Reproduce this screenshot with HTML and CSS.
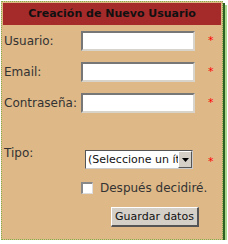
FILE: index.html
```html
<!DOCTYPE html>
<html lang="es">
<head>
  <meta charset="UTF-8">
  <title>Creación de Nuevo Usuario</title>
  <link rel="stylesheet" href="styles.css">
</head>
<body>
  <form class="panel">
    <div class="titulo">Creación de Nuevo Usuario</div>

    <div class="fila">
      <label class="etiqueta">Usuario:</label>
      <input type="text" class="campo">
      <span class="requerido">*</span>
    </div>
    <div class="fila">
      <label class="etiqueta">Email:</label>
      <input type="text" class="campo">
      <span class="requerido">*</span>
    </div>
    <div class="fila">
      <label class="etiqueta">Contraseña:</label>
      <input type="password" class="campo">
      <span class="requerido">*</span>
    </div>

    <div class="fila tipo">
      <label class="etiqueta">Tipo:</label>
      <div class="combo">
        <span class="combo-texto">(Seleccione un ítem)</span>
        <span class="combo-boton">
          <svg width="7" height="4" viewBox="0 0 7 4"><path d="M0 0h7L3.5 4z" fill="#000"/></svg>
        </span>
      </div>
      <span class="requerido">*</span>
    </div>

    <div class="fila opcion">
      <input type="checkbox" class="casilla">
      <span class="texto-casilla">Después decidiré.</span>
    </div>

    <div class="acciones">
      <button type="button" class="boton">Guardar datos</button>
    </div>
  </form>
</body>
</html>
```

FILE: styles.css
```css
body {
  margin: 0;
  background-color: #fff;
  font-family: "DejaVu Sans", Verdana, sans-serif;
}

.panel {
  margin: 1px 0 0 1px;
  width: 222px;
  height: 239px;
  box-sizing: border-box;
  border: 1px dotted #7fb24a;
  background-color: #deb887;
  box-shadow: 2px 2px 0 #2f5f22, 4px 4px 0 #a9d88c;
  padding: 1px 0 0 1px;
}

.titulo {
  height: 22px;
  line-height: 22px;
  margin-right: 1px;
  background-color: #a52a2a;
  color: #111;
  font-size: 11px;
  font-weight: bold;
  text-align: center;
}

.fila {
  display: flex;
  align-items: center;
  height: 31px;
  padding-left: 1px;
}

.etiqueta {
  width: 77px;
  font-size: 12px;
  color: #333;
}

.campo {
  width: 114px;
  height: 20px;
  box-sizing: border-box;
  margin: 0;
  border-style: solid;
  border-width: 2px;
  border-color: #777 #d8d4cc #d8d4cc #777;
  background-color: #fff;
}

.requerido {
  margin-left: 13px;
  color: #f00;
  font-size: 11px;
  line-height: 1;
}

/* fila de tipo, separada del resto */
.fila.tipo {
  margin-top: 32px;
  height: 19px;
  align-items: flex-start;
}

.tipo .etiqueta {
  margin-top: -4px;
}

.combo {
  display: flex;
  width: 108px;
  height: 19px;
  box-sizing: border-box;
  margin-left: 4px;
  border-style: solid;
  border-width: 1px;
  border-color: #555 #ccc #ccc #555;
  background-color: #fff;
}

.combo-texto {
  flex: 1;
  overflow: hidden;
  white-space: nowrap;
  padding-left: 2px;
  font-size: 11px;
  line-height: 17px;
  color: #111;
}

.combo-boton {
  display: flex;
  align-items: center;
  justify-content: center;
  width: 14px;
  box-sizing: border-box;
  border-style: solid;
  border-width: 1px;
  border-color: #fff #555 #555 #fff;
  background-color: #d4d0c8;
}

.tipo .requerido {
  margin-top: 6px;
  margin-left: 15px;
}

.fila.opcion {
  margin-top: 9px;
  height: 20px;
  padding-left: 78px;
}

.casilla {
  appearance: none;
  -webkit-appearance: none;
  width: 12px;
  height: 12px;
  margin: 0;
  box-sizing: border-box;
  border-style: solid;
  border-width: 2px 1px 1px 2px;
  border-color: #888 #ddd #ddd #888;
  background-color: #fff;
}

.texto-casilla {
  margin-left: 7px;
  font-size: 12px;
  color: #333;
}

.acciones {
  display: flex;
  justify-content: flex-end;
  padding-right: 23px;
  margin-top: 9px;
}

.boton {
  width: 88px;
  height: 20px;
  padding: 0;
  box-sizing: border-box;
  border-style: solid;
  border-width: 1px 2px 2px 1px;
  border-color: #fff #555 #555 #fff;
  background-color: #d4d0c8;
  font-family: "DejaVu Sans", Verdana, sans-serif;
  font-size: 11px;
  color: #111;
}
```
